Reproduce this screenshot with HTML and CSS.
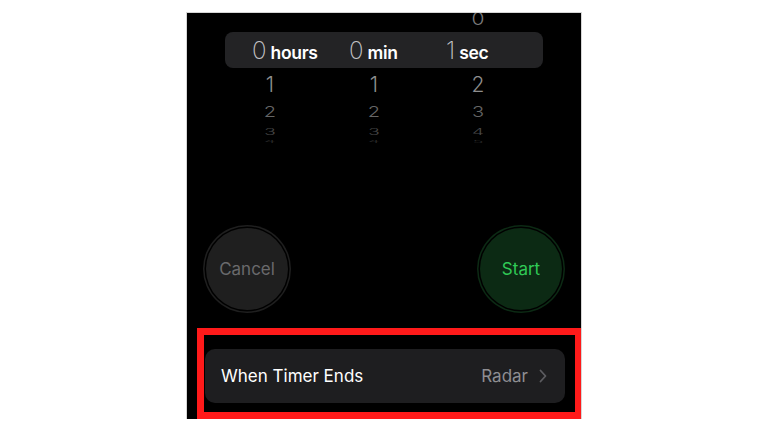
FILE: index.html
```html
<!DOCTYPE html>
<html>
<head>
<meta charset="utf-8">
<link rel="stylesheet" href="styles.css">
</head>
<body>
<div class="phone">
  <div class="picker">
    <div class="row row-up">
      <span class="cell"></span><span class="cell"></span><span class="cell">0</span>
    </div>
    <div class="bar">
      <span class="group"><span class="num">0</span><span class="unit">hours</span></span>
      <span class="group"><span class="num">0</span><span class="unit">min</span></span>
      <span class="group"><span class="num">1</span><span class="unit">sec</span></span>
    </div>
    <div class="row row-1">
      <span class="cell">1</span><span class="cell">1</span><span class="cell">2</span>
    </div>
    <div class="row row-2">
      <span class="cell">2</span><span class="cell">2</span><span class="cell">3</span>
    </div>
    <div class="row row-3">
      <span class="cell">3</span><span class="cell">3</span><span class="cell">4</span>
    </div>
    <div class="row row-4">
      <span class="cell">4</span><span class="cell">4</span><span class="cell">5</span>
    </div>
  </div>

  <div class="buttons">
    <div class="btn btn-cancel">Cancel</div>
    <div class="btn btn-start">Start</div>
  </div>

  <div class="highlight">
    <div class="card">
      <span class="card-label">When Timer Ends</span>
      <span class="card-value">Radar
        <svg class="chev" width="8" height="14" viewBox="0 0 8 14"><path d="M1.5 1.5L6.5 7L1.5 12.5" fill="none" stroke="#5c5c60" stroke-width="1.8" stroke-linecap="round" stroke-linejoin="round"/></svg>
      </span>
    </div>
  </div>
</div>
</body>
</html>
```
FILE: styles.css
```css
html, body {
  margin: 0;
  padding: 0;
  background: #ffffff;
}
body {
  font-family: "Inter", "Liberation Sans", sans-serif;
}
.phone {
  margin: 12px 0 0 186px;
  width: 394px;
  height: 406px;
  background: #000;
  border: 1px solid #d6d6d6;
  border-bottom: none;
  display: flex;
  flex-direction: column;
  overflow: hidden;
}
.picker {
  display: flex;
  flex-direction: column;
  height: 135px;
}
.row {
  display: flex;
  padding-left: 31px;
  overflow: hidden;
  font-weight: 300;
  align-items: center;
}
.cell {
  width: 104px;
  text-align: center;
  display: block;
}
.row-up {
  height: 19px;
  font-size: 21px;
  color: #7a7a7c;
  align-items: flex-end;
  line-height: 19px;
}
.row-up .cell {
  transform: scaleY(0.85);
  transform-origin: center bottom;
  position: relative;
  top: -5px;
}
.bar {
  height: 36px;
  margin: 0 38px;
  background: #232325;
  border-radius: 8px;
  display: flex;
  align-items: center;
  padding-left: 27px;
}
.group {
  width: 116px;
  display: flex;
  align-items: baseline;
  white-space: nowrap;
}
.num {
  font-size: 24px;
  font-weight: 200;
  color: #c4c4c6;
  margin-right: 4px;
}
.unit {
  font-size: 17.5px;
  font-weight: 600;
  color: #fff;
  letter-spacing: -0.3px;
}
.row-1 {
  height: 32px;
  font-size: 21px;
  color: #8e8e8e;
}
.row-2 {
  height: 24px;
  font-size: 20px;
  color: #666666;
}
.row-2 .cell { transform: scaleY(0.75); }
.row-3 {
  height: 16px;
  font-size: 19px;
  color: #484848;
}
.row-3 .cell { transform: scaleY(0.45); }
.row-4 {
  height: 8px;
  font-size: 18px;
  color: #2a2a2a;
  align-items: flex-start;
}
.row-4 .cell { transform: scaleY(0.25); transform-origin: center top; line-height: 8px; }

.buttons {
  margin-top: 77px;
  height: 88px;
  padding: 0 16px;
  display: flex;
  justify-content: space-between;
  align-items: center;
}
.btn {
  width: 82px;
  height: 82px;
  margin: 3px;
  border-radius: 50%;
  display: flex;
  align-items: center;
  justify-content: center;
  font-size: 17px;
}
.btn-cancel {
  background: #1f1f1f;
  color: #6a6a6c;
  box-shadow: 0 0 0 1.5px #000, 0 0 0 3px #1f1f1f;
}
.btn-start {
  background: #0c2a14;
  color: #30c956;
  box-shadow: 0 0 0 1.5px #000, 0 0 0 3px #0c2a14;
}

.highlight {
  margin: 15px -1px 0 10px;
  border: 7px solid #ff1a1a;
  padding: 14px 10px 9px 1px;
}
.card {
  height: 54px;
  background: #1e1e20;
  border-radius: 10px;
  display: flex;
  align-items: center;
  justify-content: space-between;
  padding: 0 18px 0 16px;
}
.card-label {
  color: #fff;
  font-size: 17px;
}
.card-value {
  color: #8e8e92;
  font-size: 17px;
  display: flex;
  align-items: center;
  gap: 11px;
}
.chev { display: block; }
```
